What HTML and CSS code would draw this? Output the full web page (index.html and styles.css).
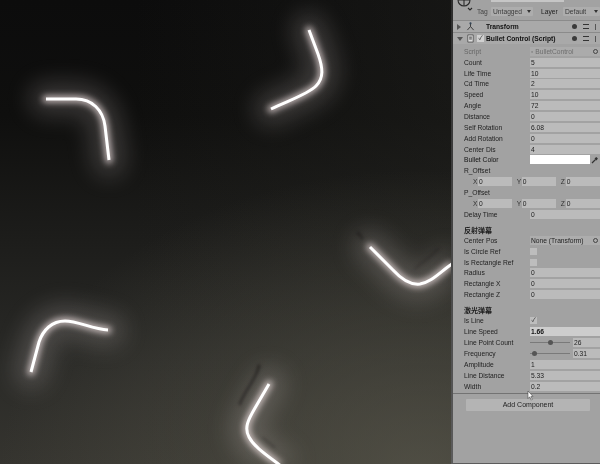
FILE: index.html
```html
<!DOCTYPE html>
<html lang="en">
<head>
<meta charset="utf-8">
<title>Bullet Control</title>
<link rel="stylesheet" href="styles.css">
</head>
<body>
<div class="app">
  <div class="scene">
    <svg class="layer layer-smudge" viewBox="0 0 451 464" width="451" height="464">
      <path d="M259 366 C256 380 244 392 240 404"/>
      <path d="M358 233 L362 238"/>
      <path class="faint" d="M263 438 L274 447"/>
      <path class="faint" d="M438 249 C430 258 422 262 415 269"/>
    </svg>
    <svg class="layer layer-haze" viewBox="0 0 451 464" width="451" height="464">
      <path d="M46 99 L76 99 C92 99 103 110 105 126 L109 160"/>
      <path d="M309 30 L318 54 C323 68 324 78 316 86 C308 94 290 100 271 109"/>
      <path d="M31 372 L39 342 C43 330 52 321 65 321 C78 321 92 329 108 330"/>
      <path d="M370 247 L393 270 C403 281 412 285 420 284 C432 282 440 272 452 264"/>
      <path d="M269 384 L255 408 C248 420 244 428 249 437 C254 447 268 456 281 466"/>
    </svg>
    <svg class="layer layer-glow" viewBox="0 0 451 464" width="451" height="464">
      <path d="M46 99 L76 99 C92 99 103 110 105 126 L109 160"/>
      <path d="M309 30 L318 54 C323 68 324 78 316 86 C308 94 290 100 271 109"/>
      <path d="M31 372 L39 342 C43 330 52 321 65 321 C78 321 92 329 108 330"/>
      <path d="M370 247 L393 270 C403 281 412 285 420 284 C432 282 440 272 452 264"/>
      <path d="M269 384 L255 408 C248 420 244 428 249 437 C254 447 268 456 281 466"/>
    </svg>
    <svg class="layer layer-beam" viewBox="0 0 451 464" width="451" height="464">
      <path d="M46 99 L76 99 C92 99 103 110 105 126 L109 160"/>
      <path d="M309 30 L318 54 C323 68 324 78 316 86 C308 94 290 100 271 109"/>
      <path d="M31 372 L39 342 C43 330 52 321 65 321 C78 321 92 329 108 330"/>
      <path d="M370 247 L393 270 C403 281 412 285 420 284 C432 282 440 272 452 264"/>
      <path d="M269 384 L255 408 C248 420 244 428 249 437 C254 447 268 456 281 466"/>
    </svg>
  </div>
  <aside class="inspector">
    <div class="object-head">
      <div class="name-field"></div>
      <div class="tag-row">
        <svg class="cube" viewBox="0 0 20 14" width="20" height="14"><circle cx="9" cy="3" r="6"/><path d="M9 -3 V9 M3 3 H15 M13 11 l2 2 l2 -2"/></svg>
        <span class="tag-label">Tag</span>
        <span class="select tag-select">Untagged<i class="caret"></i></span>
        <span class="layer-label">Layer</span>
        <span class="select layer-select">Default<i class="caret"></i></span>
      </div>
    </div>
    <div class="comp-head comp-transform">
      <i class="tri-right"></i>
      <svg class="comp-icon" viewBox="0 0 10 10" width="9" height="9"><path d="M5 1 V5 M5 5 L1.5 9 M5 5 L8.5 9"/><circle cx="5" cy="1.6" r="1.2"/></svg>
      <b class="comp-title">Transform</b>
      <span class="comp-tools"><i class="dot"></i><i class="sliders"></i><i class="more"></i></span>
    </div>
    <div class="comp-head comp-script">
      <i class="tri-down"></i>
      <svg class="comp-icon" viewBox="0 0 10 10" width="9" height="9"><path class="paper" d="M2 1 H8 V9 H2 Z"/><path d="M3.5 3.5 H6.5 M3.5 5.5 H6.5"/></svg>
      <span class="check on">✓</span>
      <b class="comp-title">Bullet Control (Script)</b>
      <span class="comp-tools"><i class="dot"></i><i class="sliders"></i><i class="more"></i></span>
    </div>
    <div class="props">
      <div class="row dim"><label>Script</label><div class="field script-field">▫ BulletControl<i class="target"></i></div></div>
      <div class="row"><label>Count</label><div class="field">5</div></div>
      <div class="row"><label>Life Time</label><div class="field">10</div></div>
      <div class="row"><label>Cd Time</label><div class="field">2</div></div>
      <div class="row"><label>Speed</label><div class="field">10</div></div>
      <div class="row"><label>Angle</label><div class="field">72</div></div>
      <div class="row"><label>Distance</label><div class="field">0</div></div>
      <div class="row"><label>Self Rotation</label><div class="field">6.08</div></div>
      <div class="row"><label>Add Rotation</label><div class="field">0</div></div>
      <div class="row"><label>Center Dis</label><div class="field">4</div></div>
      <div class="row"><label class="strong">Bullet Color</label><div class="color-cell"><div class="swatch"></div>
        <svg class="dropper" viewBox="0 0 8 8" width="8" height="8"><path d="M1 7 L5 3 M4 2 L6 4 M5 1.5 L6.5 3"/></svg></div></div>
      <div class="row"><label>R_Offset</label></div>
      <div class="row vec"><span>X</span><div class="field">0</div><span>Y</span><div class="field">0</div><span>Z</span><div class="field">0</div></div>
      <div class="row"><label>P_Offset</label></div>
      <div class="row vec"><span>X</span><div class="field">0</div><span>Y</span><div class="field">0</div><span>Z</span><div class="field">0</div></div>
      <div class="row"><label>Delay Time</label><div class="field">0</div></div>
      <h3 class="section">反射弹幕</h3>
      <div class="row"><label>Center Pos</label><div class="field obj-field">None (Transform)<i class="target"></i></div></div>
      <div class="row"><label>Is Circle Ref</label><div class="check-cell"><span class="check"></span></div></div>
      <div class="row"><label>Is Rectangle Ref</label><div class="check-cell"><span class="check"></span></div></div>
      <div class="row"><label>Radius</label><div class="field">0</div></div>
      <div class="row"><label>Rectangle X</label><div class="field">0</div></div>
      <div class="row"><label>Rectangle Z</label><div class="field">0</div></div>
      <h3 class="section">激光弹幕</h3>
      <div class="row"><label>Is Line</label><div class="check-cell"><span class="check on">✓</span></div></div>
      <div class="row"><label>Line Speed</label><div class="field active">1.66</div></div>
      <div class="row"><label>Line Point Count</label><div class="slider"><div class="track"><i class="thumb thumb-mid"></i></div><div class="field">26</div></div></div>
      <div class="row"><label>Frequency</label><div class="slider"><div class="track"><i class="thumb thumb-low"></i></div><div class="field">0.31</div></div></div>
      <div class="row"><label>Amplitude</label><div class="field">1</div></div>
      <div class="row"><label>Line Distance</label><div class="field">5.33</div></div>
      <div class="row"><label>Width</label><div class="field">0.2</div></div>
    </div>
    <div class="add-wrap"><button class="add-btn">Add Component</button></div>
    <svg class="cursor" viewBox="0 0 8 12" width="7" height="10"><path d="M1 0 V9 L3 7 L5 11 L6 10 L4.5 6.5 H7 Z"/></svg>
  </aside>
</div>
</body>
</html>
```
FILE: styles.css
```css
* { box-sizing: border-box; }
html, body { margin: 0; padding: 0; }
body { width: 600px; height: 464px; overflow: hidden; font-family: "Liberation Sans", "Noto Sans CJK SC", sans-serif; background: #111; }
.app { display: flex; width: 600px; height: 464px; }

.scene {
  position: relative;
  width: 451px; flex: none; height: 464px; overflow: hidden;
  background:
    radial-gradient(ellipse 420px 300px at 420px 470px, rgba(92,90,78,.7), rgba(60,58,50,0) 100%),
    linear-gradient(90deg, rgba(0,0,0,0) 30%, rgba(40,40,36,.35) 100%),
    linear-gradient(180deg, #0c0c0c 0%, #0f0f0e 25%, #1d1d1b 52%, #2a2a27 78%, #35342f 100%);
}
.layer { position: absolute; left: 0; top: 0; display: block; fill: none; stroke-linecap: round; stroke-linejoin: round; }
.layer-beam { stroke: #fff; stroke-width: 3; stroke-linecap: butt; filter: blur(.35px); }
.layer-glow { stroke: rgba(255,240,240,.7); stroke-width: 7; filter: blur(3px); }
.layer-haze { stroke: rgba(215,205,205,.2); stroke-width: 34; filter: blur(11px); }
.layer-smudge { stroke: rgba(15,14,12,.65); stroke-width: 3; filter: blur(1.4px); }
.layer-smudge .faint { stroke: rgba(15,14,12,.3); }

.inspector { position: relative; width: 149px; flex: none; height: 464px; padding-left: 2px; background: linear-gradient(180deg, #2c2c2c 0, #5c5c5c 100%); color: #1c1c1c; font-size: 6.7px; line-height: 9px; overflow: hidden; filter: blur(.35px); }
.inspector > * { background-color: #a2a2a2; }
.object-head { height: 20px; position: relative; }
.name-field { position: absolute; left: 38px; right: 36px; top: 0; height: 2px; background: #c6c6c6; }
.tag-row { display: flex; align-items: center; height: 20px; padding-top: 2px; position: relative; }
.cube { position: absolute; left: 2px; top: -3px; fill: none; stroke: #2a2a2a; stroke-width: 1.1; }
.tag-label { margin-left: 24px; width: 14px; color: #444; }
.select { display: flex; align-items: center; justify-content: space-between; background: #adadad; color: #3a3a3a; height: 9px; padding: 0 2px; border-radius: 1px; }
.tag-select { width: 42px; }
.layer-label { margin-left: 8px; width: 22px; color: #222; }
.layer-select { flex: 1; }
.caret { width: 0; height: 0; border: 2px solid transparent; border-top: 3px solid #333; border-bottom: 0; }

.comp-head { display: flex; align-items: center; height: 12px; padding-left: 4px; border-top: 1px solid #8b8b8b; background-color: #a9a9a9; color: #111; }
.comp-title { font-size: 6.7px; font-weight: 700; white-space: nowrap; }
.comp-transform .comp-title { margin-left: 11px; }
.comp-script .comp-title { margin-left: 2px; }
.comp-icon { flex: none; margin-left: 3px; fill: none; stroke: #333; stroke-width: 1; }
.comp-icon .paper { fill: #ddd; stroke: #555; }
.comp-transform .comp-icon { margin-left: 5px; }
.comp-transform .comp-icon circle { fill: #345; stroke: none; }
.tri-right { flex: none; width: 0; height: 0; border: 3px solid transparent; border-left: 4px solid #555; border-right: 0; }
.tri-down { flex: none; width: 0; height: 0; border: 3px solid transparent; border-top: 4px solid #555; border-bottom: 0; }
.comp-tools { display: flex; align-items: center; gap: 6px; margin-left: auto; padding-right: 4px; }
.dot { width: 5px; height: 5px; border-radius: 50%; background: #3a3a3a; }
.sliders { width: 6px; height: 5px; border-top: 1px solid #333; border-bottom: 1px solid #333; }
.more { width: 1px; height: 6px; background: #555; }

.check { display: inline-flex; align-items: center; justify-content: center; width: 7px; height: 7px; background: #bdbdbd; font-size: 6px; line-height: 7px; color: #222; flex: none; }
.comp-script .check { margin-left: 2px; background: #d0d0d0; }

.props { padding: 2px 0 2px 11px; }
.row { display: flex; align-items: center; height: 10.85px; }
.row label { width: 66px; flex: none; color: #222; white-space: nowrap; }
.row label.strong { color: #111; }
.row.dim label { color: #666; }
.field { flex: 1; min-width: 0; height: 9px; background: #bbb; padding-left: 1px; color: #222; white-space: nowrap; overflow: hidden; position: relative; }
.field.active { background: #cdcdcd; color: #111; font-weight: 700; }
.script-field { background: #ababab; color: #6e6e6e; }
.obj-field { background: #adadad; }
.target { position: absolute; right: 2px; top: 2px; width: 5px; height: 5px; border: 1px solid #444; border-radius: 50%; }
.color-cell { flex: 1; display: flex; align-items: center; height: 9px; }
.swatch { width: 60px; height: 9px; background: #fff; }
.dropper { margin-left: 1px; fill: none; stroke: #333; stroke-width: 1.2; }
.check-cell { flex: 1; display: flex; align-items: center; }
.row.vec { padding-left: 9px; gap: 0; }
.row.vec span { width: 5px; flex: none; color: #333; }
.row.vec .field { flex: 1; margin-right: 4.5px; }
.row.vec .field:last-child { margin-right: 0; }
.section { margin: 6px 0 0; height: 9.5px; line-height: 10px; font-size: 7px; font-weight: 700; color: #1c1c1c; }
.slider { flex: 1; display: flex; align-items: center; }
.track { position: relative; width: 40px; height: 1px; background: #7a7a7a; margin-right: 3px; }
.thumb { position: absolute; top: -2px; width: 5px; height: 5px; border-radius: 50%; background: #555; }
.thumb-mid { left: 18px; }
.thumb-low { left: 2px; }
.slider .field { flex: 1; }

.add-wrap { height: 70px; border-top: 1px solid #737373; padding: 5px 9px 0 13px; }
.add-btn { display: block; width: 124px; height: 12px; padding: 0; border: 0; border-radius: 1px; background: #b4b4b4; color: #222; font: 7px/12px "Liberation Sans", sans-serif; }
.cursor { position: absolute; left: 76px; top: 391px; fill: #fff; stroke: #333; stroke-width: .6; background: none !important; }
```
